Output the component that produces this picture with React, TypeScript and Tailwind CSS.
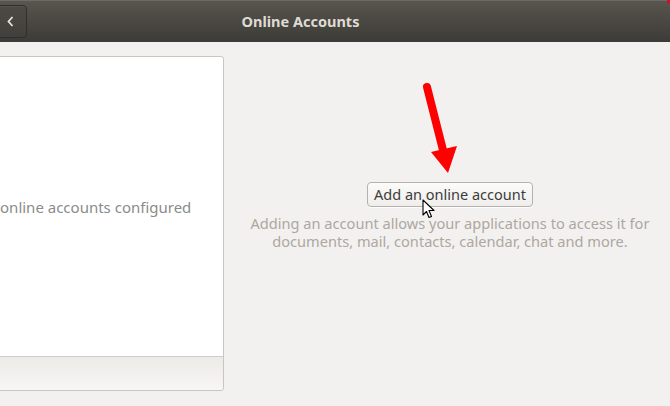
import React from "react";

export default function App() {
  return (
    <div
      className="relative w-[670px] h-[406px] overflow-hidden bg-[#f2f1f0]"
      style={{ fontFamily: '"Noto Sans", "DejaVu Sans", sans-serif' }}
    >
      {/* Header bar */}
      <div className="relative flex h-[42px] items-center bg-gradient-to-b from-[#59554f] to-[#3c3b37] border-t border-[#6e6a64]">
        <div className="ml-[-8px] flex h-[33px] w-[35px] items-center justify-end rounded-[4px] border border-[#2f2e2b] bg-gradient-to-b from-[#4d4a45] to-[#42403c] pr-[12px] shadow-[inset_0_1px_0_rgba(255,255,255,0.06)]">
          <svg width="7" height="11" viewBox="0 0 7 11">
            <path d="M5.5 1 L1.5 5.5 L5.5 10" fill="none" stroke="#e6e3dd" strokeWidth="1.8" />
          </svg>
        </div>
        <div className="flex-1 pr-[96px] text-center text-[14.5px] font-bold text-[#dfdbd2]">
          Online Accounts
        </div>
        <div className="absolute right-[-3px] top-[-3px] h-[6px] w-[6px] rounded-full bg-[#c7162b]" />
      </div>

      {/* Body */}
      <div className="flex">
        <div className="ml-[-57px] mt-[14px] flex h-[335px] w-[281px] flex-col rounded-[3px] border border-[#c9c6c1] bg-white">
          <div className="flex flex-1 items-center justify-center pt-[2px] text-[15px] text-[#8b8b8b]">
            No online accounts configured
          </div>
          <div className="h-[34px] border-t border-[#cfccc7] bg-gradient-to-b from-[#ecebe8] to-[#f7f6f4] rounded-b-[3px]" />
        </div>

        <div className="flex flex-1 flex-col items-center pl-[6px] pt-[140px]">
          <button className="h-[25px] rounded-[4px] border border-[#b6b2ab] bg-gradient-to-b from-[#fbfbfa] to-[#efeeec] px-[6px] text-[14.5px] leading-none text-[#3c3c3c] shadow-[0_1px_0_rgba(255,255,255,0.8)]">
            Add an online account
          </button>
          <div className="mt-[7px] whitespace-nowrap text-center text-[14.6px] leading-[18px] text-[#aea79f]">
            Adding an account allows your applications to access it for
            <br />
            documents, mail, contacts, calendar, chat and more.
          </div>
        </div>
      </div>

      {/* Red annotation arrow */}
      <svg className="absolute left-[415px] top-[78px]" width="50" height="100" viewBox="0 0 50 100">
        <line x1="12" y1="9" x2="29" y2="76" stroke="#ff0000" strokeWidth="8" strokeLinecap="round" />
        <polygon points="16,74 42,68 33,95" fill="#ff0000" />
      </svg>

      {/* Mouse cursor */}
      <svg className="absolute left-[422px] top-[199px]" width="14" height="20" viewBox="0 0 14 20">
        <path d="M1 1 L1 16 L4.5 12.5 L7 18.5 L9.5 17.5 L7 11.5 L12 11.5 Z" fill="#ffffff" stroke="#000000" strokeWidth="1.1" strokeLinejoin="round" />
      </svg>
    </div>
  );
}
